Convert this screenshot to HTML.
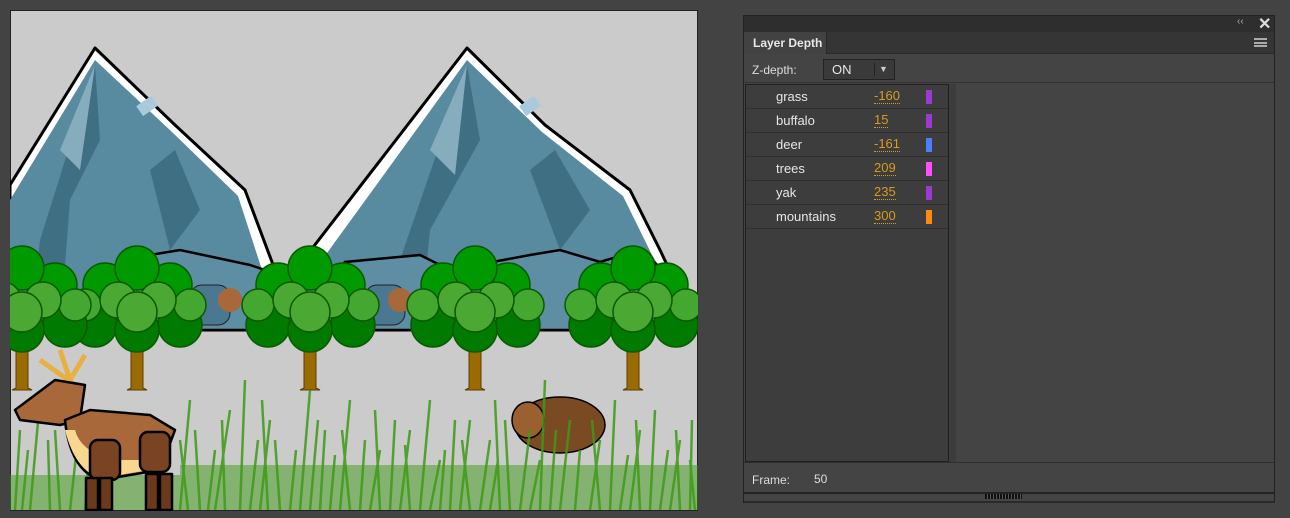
<!DOCTYPE html>
<html><head><meta charset="utf-8"><style>
body{margin:0;width:1290px;height:518px;background:#434343;position:relative;overflow:hidden;font-family:"Liberation Sans",sans-serif;}
.a{position:absolute;}
.row{position:absolute;left:0;width:202px;height:23px;border-bottom:1px solid #2f2f2f;color:#e6e6e6;font-size:13px;}
.row .n{position:absolute;left:30px;top:4px;}
.row .v{position:absolute;left:128px;top:4px;color:#d89a1f;border-bottom:1px dotted #d89a1f;line-height:14px;}
.row .c{position:absolute;left:180px;top:5px;width:6px;height:14px;}
</style></head><body>
<svg class="a" style="left:10px;top:10px" width="688" height="501" viewBox="10 10 688 501">
<rect x="10" y="10" width="688" height="501" fill="#cbcbcb" stroke="#222" stroke-width="2"/>
<g stroke="#000" stroke-width="3" stroke-linejoin="round">
<polygon points="10,185 95,48 175,125 245,190 275,270 300,330 10,330" fill="#fff"/>
<polygon points="280,290 467,48 545,125 630,190 660,250 698,330 300,330" fill="#fff"/>
</g>
<polygon points="10,200 95,60 172,132 238,196 262,270 282,330 10,330" fill="#588aa0"/>
<polygon points="298,293 467,60 542,132 623,196 652,255 698,330 300,330" fill="#588aa0"/>
<polygon points="40,240 95,65 100,140 70,200 60,330 30,330" fill="#3f6f83"/>
<polygon points="467,65 480,140 430,230 420,330 380,330 400,260" fill="#3f6f83"/>
<polygon points="150,170 175,150 200,210 170,250" fill="#3f6f83"/>
<polygon points="530,170 555,150 590,210 560,250" fill="#3f6f83"/>
<polygon points="60,150 95,65 80,170" fill="#86adbe"/>
<polygon points="430,150 467,65 455,175" fill="#86adbe"/>
<rect x="138" y="100" width="18" height="12" fill="#a9cadb" transform="rotate(-35 147 106)"/>
<rect x="521" y="100" width="18" height="12" fill="#a9cadb" transform="rotate(-35 530 106)"/>
<polygon points="150,255 180,250 250,265 280,275 310,300 345,262 420,255 450,270 530,255 560,250 600,262 640,250 698,300 698,330 150,330" fill="#5d8ea3" stroke="#000" stroke-width="2.5"/>
<line x1="10" y1="330" x2="698" y2="330" stroke="#000" stroke-width="2"/>
<g fill="#4a7890" stroke="#222" stroke-width="1"><rect x="190" y="285" width="40" height="40" rx="12"/><rect x="365" y="285" width="40" height="40" rx="12"/></g>
<g fill="#a8683a"><circle cx="230" cy="300" r="12"/><circle cx="400" cy="300" r="12"/></g>
<g id="t">
<path d="M131 330 L131 388 L127 390 L147 390 L143 388 L143 330 Z" fill="#9a6b00" stroke="#5a3d00"/>
<g stroke="#0a5a00" stroke-width="1.5">
<circle cx="95" cy="325" r="22" fill="#007a00"/><circle cx="180" cy="325" r="22" fill="#007a00"/>
<circle cx="137" cy="330" r="22" fill="#007a00"/>
<circle cx="105" cy="285" r="22" fill="#009900"/><circle cx="170" cy="285" r="22" fill="#009900"/>
<circle cx="137" cy="268" r="22" fill="#009900"/>
<circle cx="85" cy="305" r="16" fill="#44a830"/><circle cx="190" cy="305" r="16" fill="#44a830"/>
<circle cx="118" cy="300" r="18" fill="#4aa833"/><circle cx="158" cy="300" r="18" fill="#4aa833"/>
<circle cx="137" cy="312" r="20" fill="#4aa833"/>
</g></g>
<use href="#t" x="173"/><use href="#t" x="338"/><use href="#t" x="496"/><use href="#t" x="-115"/>
<g stroke="#000" stroke-width="1.5"><ellipse cx="560" cy="425" rx="45" ry="28" fill="#7a4a22"/><ellipse cx="528" cy="420" rx="16" ry="18" fill="#9a6030"/></g>
<g stroke="#3e9a16" stroke-width="2.5" opacity="0.85" fill="none">
<path d="M15 510 L20 430 M30 510 L40 400 M50 510 L48 440 M70 510 L80 420 M95 510 L100 450 M180 510 L190 400 M200 510 L195 430 M215 510 L230 410 M240 510 L245 380 M260 510 L270 420 M280 510 L275 440 M300 510 L310 390 M320 510 L325 430 M340 510 L350 400 M360 510 L365 440 M380 510 L375 410 M400 510 L410 430 M420 510 L430 400 M440 510 L445 450 M460 510 L470 420 M480 510 L490 440 M500 510 L495 400 M520 510 L530 430 M540 510 L545 380 M560 510 L570 420 M590 510 L600 440 M610 510 L615 400 M630 510 L640 430 M650 510 L655 410 M670 510 L680 440 M690 510 L692 420"/>
<path d="M22 510 L28 450 M60 510 L55 430 M85 510 L90 440 M188 510 L180 440 M208 510 L215 450 M225 510 L222 420 M250 510 L258 440 M268 510 L262 400 M290 510 L296 450 M310 510 L318 420 M330 510 L335 455 M350 510 L342 430 M370 510 L380 450 M390 510 L395 420 M410 510 L405 445 M430 510 L440 460 M450 510 L455 420 M470 510 L462 440 M490 510 L498 460 M510 510 L505 420 M530 510 L540 460 M550 510 L556 430 M575 510 L580 450 M600 510 L592 420 M620 510 L628 455 M640 510 L636 420 M660 510 L668 450 M680 510 L676 430 M695 510 L690 460"/>
</g>
<rect x="180" y="465" width="518" height="45" fill="#3e9a16" opacity="0.5"/>
<rect x="10" y="475" width="170" height="35" fill="#3e9a16" opacity="0.5"/>
<g stroke="#000" stroke-width="2.5" stroke-linejoin="round">
<path d="M70 380 L60 350 M70 380 L85 355 M75 385 L40 360" stroke="#e8b040" stroke-width="5" fill="none"/>
<polygon points="15,410 55,380 85,385 80,420 60,425 20,420" fill="#a8683a"/>
<path d="M65 420 Q70 470 100 480 L160 470 L175 430 L150 415 L90 410 Z" fill="#a8683a"/>
<path d="M65 430 Q75 470 100 478 L150 470 L150 460 L110 460 Q80 450 75 430 Z" fill="#f8d890" stroke="none"/>
<rect x="90" y="440" width="30" height="40" rx="8" fill="#7a4422"/><rect x="140" y="432" width="30" height="40" rx="8" fill="#7a4422"/>
<rect x="86" y="478" width="12" height="32" fill="#6a3a1a"/><rect x="100" y="478" width="12" height="32" fill="#6a3a1a"/>
<rect x="146" y="474" width="12" height="36" fill="#6a3a1a"/><rect x="160" y="474" width="12" height="36" fill="#6a3a1a"/>
</g>
</svg>

<div class="a" style="left:743px;top:15px;width:532px;height:488px;background:#444;border:1px solid #222;box-sizing:border-box;"></div>
<div class="a" style="left:744px;top:16px;width:530px;height:16px;background:#2e2e2e;"></div>
<div class="a" style="left:1237px;top:16px;color:#aaa;font-size:10px;">‹‹</div>
<div class="a" style="left:1258px;top:14px;color:#ddd;font-size:16px;font-weight:bold;">✕</div>
<div class="a" style="left:744px;top:32px;width:530px;height:21px;background:#353535;border-bottom:1px solid #2a2a2a;"></div>
<div class="a" style="left:744px;top:32px;width:82px;height:22px;background:#424242;color:#e8e8e8;font-size:12px;font-weight:bold;line-height:22px;text-indent:9px;border-right:1px solid #2a2a2a;">Layer Depth</div>
<div class="a" style="left:1254px;top:38px;width:13px;height:9px;border-top:2px solid #aaa;border-bottom:2px solid #aaa;box-sizing:border-box;"><div style="margin-top:1.5px;height:2px;background:#aaa"></div></div>
<div class="a" style="left:752px;top:63px;color:#ddd;font-size:12px;">Z-depth:</div>
<div class="a" style="left:823px;top:59px;width:72px;height:21px;background:#3a3a3a;border:1px solid #222;box-sizing:border-box;color:#e6e6e6;font-size:13px;line-height:19px;text-indent:8px;">ON<span style="position:absolute;left:50px;top:3px;height:13px;border-left:1px solid #222"></span><span style="position:absolute;left:55px;top:0;font-size:9px;color:#ccc;text-indent:0">▼</span></div>
<div class="a" style="left:744px;top:82px;width:530px;height:1px;background:#333"></div>
<div class="a" style="left:745px;top:84px;width:204px;height:378px;background:#3d3d3d;border:1px solid #1f1f1f;box-sizing:border-box;">
<div class="row" style="top:0"><span class="n">grass</span><span class="v">-160</span><span class="c" style="background:#9a3ad0"></span></div>
<div class="row" style="top:24px"><span class="n">buffalo</span><span class="v">15</span><span class="c" style="background:#9a3ad0"></span></div>
<div class="row" style="top:48px"><span class="n">deer</span><span class="v">-161</span><span class="c" style="background:#4a80ff"></span></div>
<div class="row" style="top:72px"><span class="n">trees</span><span class="v">209</span><span class="c" style="background:#ff50ff"></span></div>
<div class="row" style="top:96px"><span class="n">yak</span><span class="v">235</span><span class="c" style="background:#9a3ad0"></span></div>
<div class="row" style="top:120px"><span class="n">mountains</span><span class="v">300</span><span class="c" style="background:#ff8810"></span></div>
</div>
<div class="a" style="left:949px;top:84px;width:7px;height:378px;background:#3c3c3c;"></div>
<div class="a" style="left:744px;top:462px;width:530px;height:1px;background:#2f2f2f"></div>
<div class="a" style="left:752px;top:473px;color:#ddd;font-size:12px;">Frame:</div>
<div class="a" style="left:814px;top:472px;color:#ddd;font-size:12px;">50</div>
<div class="a" style="left:744px;top:492px;width:530px;height:2px;background:#222"></div>
<div class="a" style="left:744px;top:501px;width:530px;height:2px;background:#2a2a2a"></div>
<div class="a" style="left:985px;top:494px;width:37px;height:5px;background:repeating-linear-gradient(90deg,#111 0 2px,#555 2px 3px);"></div>
</body></html>
